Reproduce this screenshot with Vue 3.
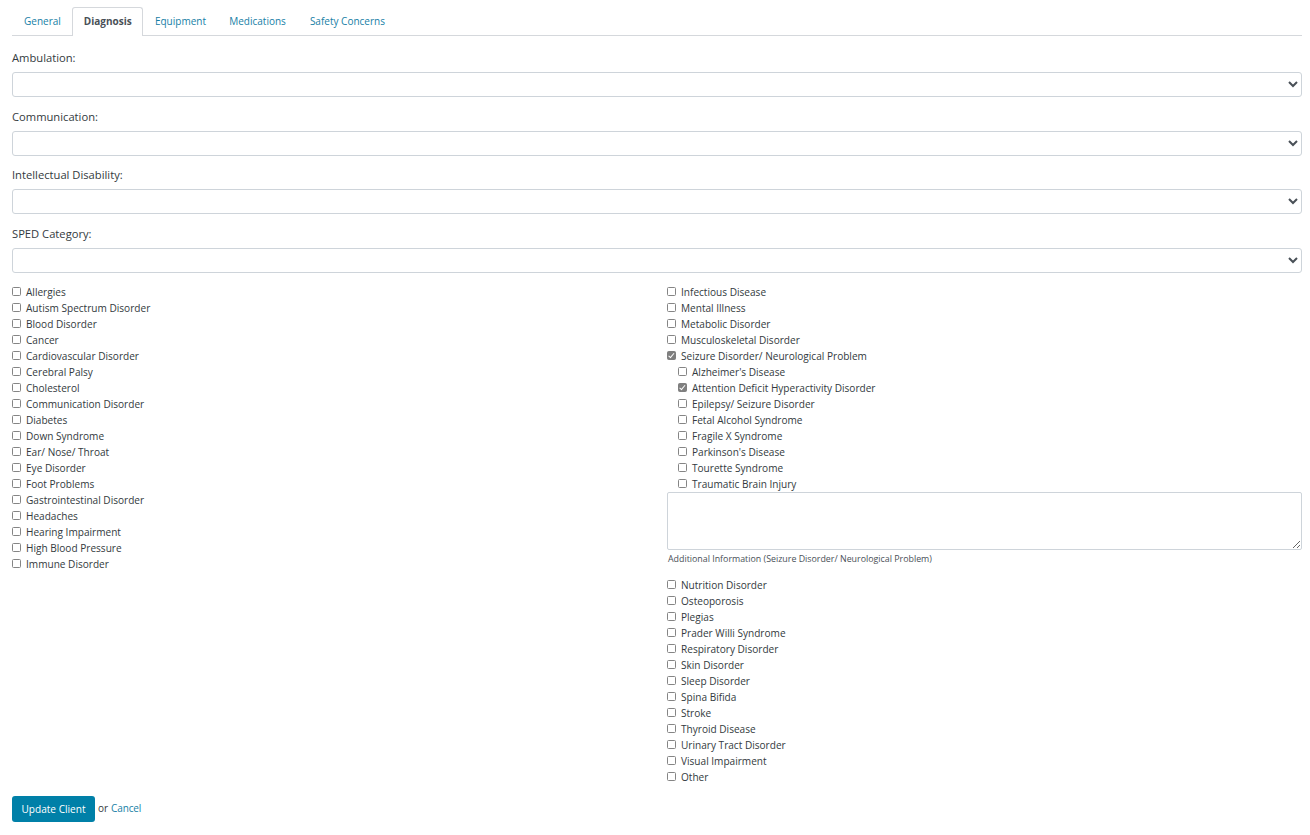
<script setup>
const tabs = ['General', 'Diagnosis', 'Equipment', 'Medications', 'Safety Concerns']
const selects = ['Ambulation:', 'Communication:', 'Intellectual Disability:', 'SPED Category:']
const left = ['Allergies', 'Autism Spectrum Disorder', 'Blood Disorder', 'Cancer', 'Cardiovascular Disorder', 'Cerebral Palsy', 'Cholesterol', 'Communication Disorder', 'Diabetes', 'Down Syndrome', 'Ear/ Nose/ Throat', 'Eye Disorder', 'Foot Problems', 'Gastrointestinal Disorder', 'Headaches', 'Hearing Impairment', 'High Blood Pressure', 'Immune Disorder']
const rightTop = ['Infectious Disease', 'Mental Illness', 'Metabolic Disorder', 'Musculoskeletal Disorder']
const subs = ['Alzheimer\'s Disease', 'Attention Deficit Hyperactivity Disorder', 'Epilepsy/ Seizure Disorder', 'Fetal Alcohol Syndrome', 'Fragile X Syndrome', 'Parkinson\'s Disease', 'Tourette Syndrome', 'Traumatic Brain Injury']
const rightBottom = ['Nutrition Disorder', 'Osteoporosis', 'Plegias', 'Prader Willi Syndrome', 'Respiratory Disorder', 'Skin Disorder', 'Sleep Disorder', 'Spina Bifida', 'Stroke', 'Thyroid Disease', 'Urinary Tract Disorder', 'Visual Impairment', 'Other']
</script>

<template>
  <div class="page">
    <nav class="tabs">
      <a v-for="t in tabs" :key="t" class="tab" :class="{ active: t === 'Diagnosis' }" href="#">{{ t }}</a>
    </nav>
    <div v-for="s in selects" :key="s" class="field">
      <label class="field-label">{{ s }}</label>
      <select class="select"><option></option></select>
    </div>
    <div class="columns">
      <div>
        <label v-for="c in left" :key="c" class="check"><input type="checkbox" />{{ c }}</label>
      </div>
      <div>
        <label v-for="c in rightTop" :key="c" class="check"><input type="checkbox" />{{ c }}</label>
        <label class="check"><input type="checkbox" checked />Seizure Disorder/ Neurological Problem</label>
        <div class="subs">
          <label v-for="c in subs" :key="c" class="check"><input type="checkbox" :checked="c.startsWith('Attention')" />{{ c }}</label>
        </div>
        <textarea class="area"></textarea>
        <div class="hint">Additional Information (Seizure Disorder/ Neurological Problem)</div>
        <label v-for="c in rightBottom" :key="c" class="check"><input type="checkbox" />{{ c }}</label>
      </div>
    </div>
    <div class="actions">
      <button class="btn" type="button">Update Client</button>
      <span class="or">or</span>
      <a class="cancel" href="#">Cancel</a>
    </div>
  </div>
</template>

<style>
html, body { margin: 0; background: #fff; }
</style>

<style scoped>
.page {
  padding: 7px 8px 0 12px;
  font-family: "Open Sans", "Noto Sans", sans-serif;
  font-size: 10px;
  color: #333a40;
}
.tabs {
  display: flex;
  height: 28px;
  border-bottom: 1px solid #d5d8dc;
}
.tab {
  display: block;
  height: 28px;
  box-sizing: border-box;
  padding: 0 10.65px;
  border: 1px solid transparent;
  border-bottom: 0;
  line-height: 27px;
  color: #1680a6;
  text-decoration: none;
}
.tab:first-child { padding-left: 11px; padding-right: 10.3px; }
.tab:nth-child(4) { padding-right: 11.4px; }
.tab.active {
  height: 29px;
  background: #fff;
  border-color: #d5d8dc;
  border-radius: 3px 3px 0 0;
  font-weight: 700;
  color: #495057;
}
.field { height: 58.5px; }
.field-label {
  display: block;
  height: 36px;
  box-sizing: border-box;
  padding-top: 13px;
  font-size: 11.2px;
  line-height: 18px;
  color: #333a40;
}
.select {
  display: block;
  width: 100%;
  height: 25px;
  border: 1px solid #ced4da;
  border-radius: 3px;
  background: #fff;
  color: #495057;
  font-family: inherit;
  font-size: 11px;
}
.columns {
  display: grid;
  grid-template-columns: 635px 635px;
  gap: 20px;
  margin-top: 14px;
}
.check {
  display: flex;
  align-items: center;
  height: 16px;
  line-height: 16px;
  font-size: 10.08px;
  white-space: nowrap;
}
.check input {
  appearance: none;
  position: relative;
  box-sizing: border-box;
  width: 9px;
  height: 9px;
  margin: -1px 5px 0 0;
  flex: none;
  background: #fff;
  border: 1px solid #858585;
  border-radius: 1.5px;
}
.check input:checked { background: #7f7f7f; border-color: #7f7f7f; }
.check input:checked::after {
  content: "";
  position: absolute;
  left: 1.8px;
  top: 0;
  width: 2px;
  height: 4.5px;
  border: solid #fff;
  border-width: 0 1.2px 1.2px 0;
  transform: rotate(40deg);
}
.subs { padding-left: 11px; }
.area {
  display: block;
  box-sizing: border-box;
  width: 100%;
  height: 58px;
  margin: 0;
  border: 1px solid #ced4da;
  border-radius: 2px;
  background: #fff;
}
.hint {
  height: 27px;
  padding: 2px 0 0 1px;
  box-sizing: border-box;
  font-size: 8.85px;
  line-height: 14px;
  color: #495057;
}
.actions {
  display: flex;
  align-items: center;
  margin-top: 11px;
}
.btn {
  width: 83px;
  height: 26px;
  padding: 0;
  border: 0;
  border-radius: 3px;
  background: #0080a8;
  color: #fff;
  font-family: inherit;
  font-size: 10.1px;
}
.or { margin-left: 3px; padding-bottom: 2px; }
.cancel { margin-left: 3px; padding-bottom: 2px; letter-spacing: -0.15px; color: #1680a6; text-decoration: none; }
</style>
